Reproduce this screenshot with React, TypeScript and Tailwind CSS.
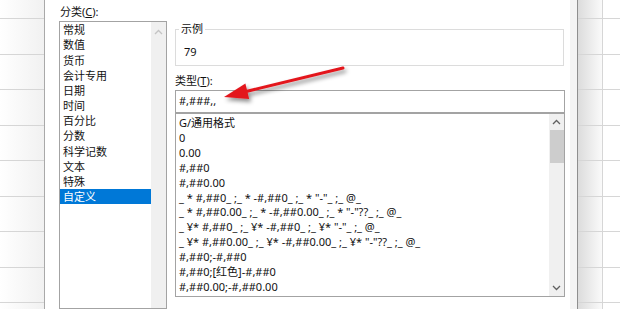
import React from "react"

const categories = ["常规", "数值", "货币", "会计专用", "日期", "时间", "百分比", "分数", "科学记数", "文本", "特殊", "自定义"]

const formats = [
  "G/通用格式",
  "0",
  "0.00",
  "#,##0",
  "#,##0.00",
  '_ * #,##0_ ;_ * -#,##0_ ;_ * "-"_ ;_ @_',
  '_ * #,##0.00_ ;_ * -#,##0.00_ ;_ * "-"??_ ;_ @_',
  '_ ¥* #,##0_ ;_ ¥* -#,##0_ ;_ ¥* "-"_ ;_ @_',
  '_ ¥* #,##0.00_ ;_ ¥* -#,##0.00_ ;_ ¥* "-"??_ ;_ @_',
  "#,##0;-#,##0",
  "#,##0;[红色]-#,##0",
  "#,##0.00;-#,##0.00",
]

// excel grid rows behind the dialog
function SheetStrip({ side }: { side: "left" | "right" }) {
  const rows = [36, 35, 36, 35, 36, 35, 36, 35, 36]
  return (
    <div className={side === "left" ? "flex h-full w-[44px] flex-col bg-gradient-to-r from-white to-[#f1f1f1]" : "flex h-full flex-1 flex-col"}>
      <div className="h-[19px] shrink-0 border-b border-[#d6d6d6]" />
      {rows.map((h, i) => (
        <div key={i} className="shrink-0 border-b border-[#d6d6d6]" style={{ height: h }} />
      ))}
    </div>
  )
}

function Chevron({ up, className }: { up?: boolean; className?: string }) {
  return (
    <svg width="9" height="6" viewBox="0 0 9 6" className={className}>
      <path d={up ? "M1 5 L4.5 1.5 L8 5" : "M1 1 L4.5 4.5 L8 1"} fill="none" stroke="currentColor" strokeWidth="1.3" />
    </svg>
  )
}

export default function App() {
  return (
    <div className="relative flex h-[309px] w-[620px] overflow-hidden bg-white font-['Noto_Sans','Noto_Sans_CJK_SC',sans-serif] text-[11px] text-[#111]">
      <SheetStrip side="left" />
      <div className="w-px bg-[#a9a9a9]" />

      {/* dialog body */}
      <div className="flex h-full w-[525px] bg-white">
        <div className="ml-[14px] flex w-[108px] flex-col">
          <div className="h-[22px] pt-[4px] pl-[1px] leading-[15px]">
            分类(<span className="underline">C</span>):
          </div>
          <div className="flex h-[300px] border border-[#a3a3a3]">
            <div className="flex-1 pl-0 leading-[15.15px]">
              {categories.map((c) => (
                <div key={c} className={c === "自定义" ? "bg-[#0078d7] pl-[3px] text-white" : "pl-[3px]"}>
                  {c}
                </div>
              ))}
            </div>
            <div className="flex w-[15px] justify-center bg-[#f0f0f0] pt-[7px]">
              <Chevron up className="text-[#c4c4c4]" />
            </div>
          </div>
        </div>

        <div className="ml-[8px] flex w-[390px] flex-col">
          <div className="relative mt-[29px] h-[37px] w-[389px] border border-[#dcdcdc]">
            <span className="absolute -top-[9px] left-[3px] bg-white px-[2px] leading-[15px]">示例</span>
            <div className="pt-[14px] pl-[8px] leading-[15px]">79</div>
          </div>
          <div className="mt-[7px] leading-[15px]">
            类型(<span className="underline">T</span>):
          </div>
          <div className="mt-[2px] h-[23px] border border-[#a3a3a3] pl-[3px] leading-[20px]">#,###,,</div>
          <div className="flex h-[184px] border border-[#a3a3a3]">
            <div className="flex-1 whitespace-pre pt-[2px] pl-[3px] leading-[14.9px]">
              {formats.map((f) => (
                <div key={f}>{f}</div>
              ))}
            </div>
            <div className="flex w-[15px] flex-col items-center bg-[#f0f0f0]">
              <div className="flex h-[16px] items-center">
                <Chevron up className="text-[#606060]" />
              </div>
              <div className="h-[33px] w-[14px] bg-[#cdcdcd]" />
              <div className="flex-1" />
              <div className="flex h-[16px] items-center">
                <Chevron className="text-[#606060]" />
              </div>
            </div>
          </div>
        </div>
      </div>

      {/* dialog edge + sheet on the right */}
      <div className="w-[7px] bg-[#f4f4f4]" />
      <div className="w-px bg-[#8f8f8f]" />
      <div className="relative flex h-full flex-1">
        <div className="w-[24px] bg-gradient-to-r from-[#dcdcdc] to-[#fafafa]">
          <SheetStrip side="right" />
        </div>
        <div className="w-px bg-[#d6d6d6]" />
        <SheetStrip side="right" />
      </div>

      {/* red annotation arrow */}
      <svg className="pointer-events-none absolute left-0 top-0" width="620" height="309">
        <defs>
          <filter id="sh" x="-20%" y="-50%" width="140%" height="200%">
            <feDropShadow dx="2" dy="3" stdDeviation="2" floodColor="#000" floodOpacity="0.45" />
          </filter>
        </defs>
        <g filter="url(#sh)">
          <line x1="343" y1="68" x2="242" y2="92.5" stroke="#e3191f" strokeWidth="3" strokeLinecap="round" />
          <polygon points="224,97 245.4,83.5 249.2,99.1" fill="#e3191f" />
        </g>
      </svg>
    </div>
  )
}
